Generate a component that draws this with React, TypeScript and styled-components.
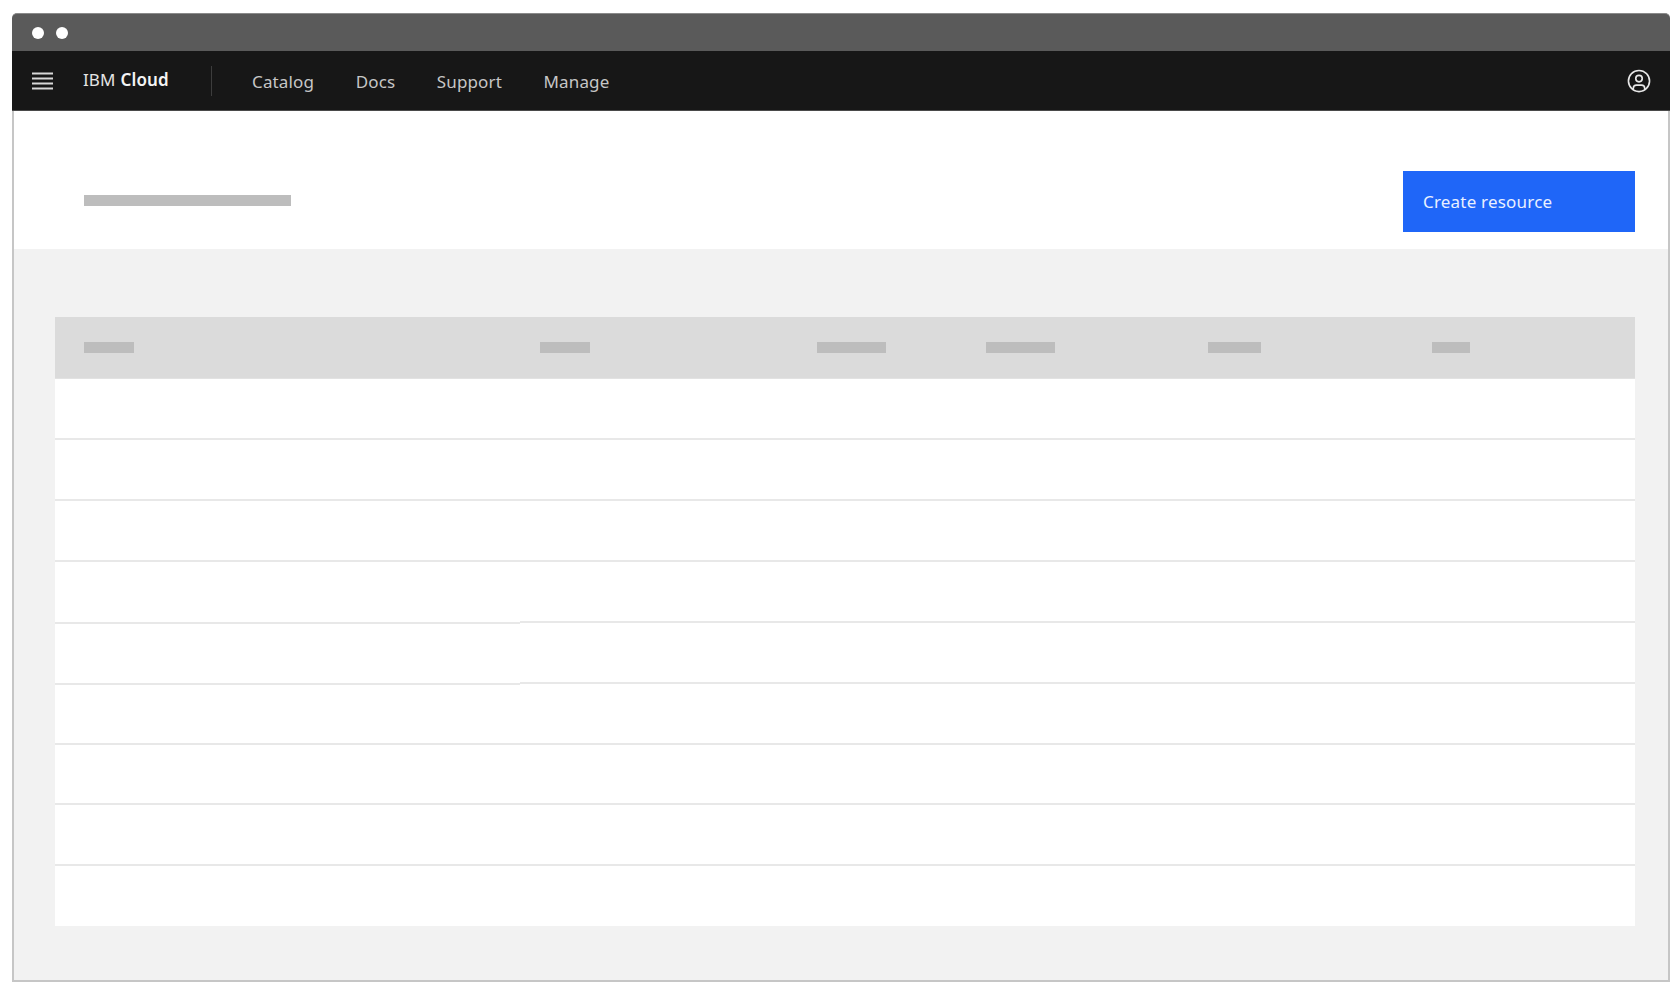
import styled, { createGlobalStyle } from 'styled-components'

const GlobalStyle = createGlobalStyle`
  html, body {
    margin: 0;
    padding: 0;
    background: #ffffff;
  }
  * {
    box-sizing: border-box;
  }
`

const Frame = styled.div`
  width: 1658px;
  height: 969px;
  margin: 13px 0 0 12px;
  display: flex;
  flex-direction: column;
  font-family: 'Noto Sans', 'Liberation Sans', sans-serif;
`

const TitleBar = styled.div`
  height: 38px;
  flex: none;
  display: flex;
  align-items: center;
  gap: 12px;
  padding: 1px 0 0 20px;
  background: #5a5a5a;
  border-top: 1px solid #8a8a8a;
  border-radius: 5px 5px 0 0;
`

const Dot = styled.span`
  width: 12px;
  height: 12px;
  border-radius: 50%;
  background: #ffffff;
`

const NavBar = styled.nav`
  height: 60px;
  flex: none;
  display: flex;
  align-items: center;
  background: #171717;
  border-bottom: 1px solid #4a4a4a;
  padding: 0 18px 0 20px;
`

const MenuIcon = styled.svg`
  width: 21px;
  height: 18px;
  flex: none;
  margin: 0 30px 0 0;
  color: #d8d8d8;
`

const Brand = styled.div`
  width: 129px;
  height: 30px;
  flex: none;
  display: flex;
  align-items: center;
  font-size: 17px;
  letter-spacing: 0.1px;
  color: #e4e4e4;
  border-right: 1px solid #3d3d3d;
  margin-right: 40px;
  padding-bottom: 3px;

  strong {
    font-weight: 600;
    color: #f4f4f4;
    margin-left: 5px;
  }
`

const NavLinks = styled.div`
  display: flex;
  gap: 41.5px;
  flex: 1;
  padding-top: 1px;
`

const NavLink = styled.span`
  font-size: 17px;
  letter-spacing: 0.15px;
  color: #c6c6c6;
`

const UserIcon = styled.svg`
  width: 26px;
  height: 26px;
  flex: none;
  color: #e8e8e8;
  margin-top: 1px;
`

const Body = styled.div`
  flex: 1;
  display: flex;
  flex-direction: column;
  border: solid #c6c6c6;
  border-width: 0 2px 2px 2px;
`

const PageHeader = styled.header`
  height: 138px;
  flex: none;
  display: flex;
  align-items: center;
  justify-content: space-between;
  padding: 60px 33px 17px 70px;
  background: #ffffff;
`

const Placeholder = styled.span<{ $w: number; $h?: number }>`
  display: block;
  width: ${({ $w }) => $w}px;
  height: ${({ $h }) => $h ?? 11}px;
  background: #bdbdbd;
`

const PageTitle = styled(Placeholder)`
  margin-top: -3px;
`

const PrimaryButton = styled.button`
  width: 232px;
  height: 61px;
  border: 0;
  padding: 0 0 0 20px;
  text-align: left;
  background: #1f66f8;
  color: #e9f0ff;
  font-family: inherit;
  font-size: 17px;
  letter-spacing: 0.2px;
`

const Content = styled.main`
  flex: 1;
  background: #f2f2f2;
  padding: 68px 33px 54px 41px;
`

const Table = styled.div`
  display: flex;
  flex-direction: column;
`

const HeaderRow = styled.div`
  height: 62px;
  display: grid;
  grid-template-columns: 456px 277px 169px 222px 224px 1fr;
  align-items: center;
  padding-left: 29px;
  background: #dbdbdb;
  border-bottom: 1px solid #e2e2e2;
`

const Row = styled.div`
  height: 61px;
  display: flex;
  background: #ffffff;

  &:nth-child(8) {
    height: 60px;
  }

  &:last-child {
    height: 60px;
  }
`

// the first column's rule sits a pixel lower on the rows marked $low
const FirstCell = styled.div<{ $low?: boolean; $last?: boolean }>`
  position: relative;
  width: 465px;
  height: ${({ $low }) => ($low ? 'calc(100% + 1px)' : '100%')};
  flex: none;
  border-bottom: ${({ $last }) => ($last ? '0' : '2px solid #e8e8e8')};
`

const RestCell = styled.div<{ $last?: boolean }>`
  flex: 1;
  border-bottom: ${({ $last }) => ($last ? '0' : '2px solid #e8e8e8')};
`

const headerWidths = [50, 50, 69, 69, 53, 38]
const rows = Array.from({ length: 9 }, (_, i) => i)

export default function App() {
  return (
    <>
      <GlobalStyle />
      <Frame>
        <TitleBar>
          <Dot />
          <Dot />
        </TitleBar>
        <NavBar>
          <MenuIcon viewBox="0 0 21 18" fill="currentColor">
            <rect y="0.5" width="21" height="2" />
            <rect y="5.5" width="21" height="2" />
            <rect y="10.5" width="21" height="2" />
            <rect y="15.5" width="21" height="2" />
          </MenuIcon>
          <Brand>
            IBM<strong>Cloud</strong>
          </Brand>
          <NavLinks>
            <NavLink>Catalog</NavLink>
            <NavLink>Docs</NavLink>
            <NavLink>Support</NavLink>
            <NavLink>Manage</NavLink>
          </NavLinks>
          <UserIcon viewBox="0 0 32 32" fill="currentColor">
            <path d="M16,8a5,5,0,1,0,5,5A5,5,0,0,0,16,8Zm0,8a3,3,0,1,1,3-3A3.0034,3.0034,0,0,1,16,16Z" />
            <path d="M16,2A14,14,0,1,0,30,16,14.0158,14.0158,0,0,0,16,2ZM10,26.3765V25a3.0033,3.0033,0,0,1,3-3h6a3.0033,3.0033,0,0,1,3,3v1.3765a11.8989,11.8989,0,0,1-12,0Zm13.9925-1.4507A5.0016,5.0016,0,0,0,19,20H13a5.0016,5.0016,0,0,0-4.9925,4.9258,12,12,0,1,1,15.985,0Z" />
          </UserIcon>
        </NavBar>
        <Body>
          <PageHeader>
            <PageTitle $w={207} />
            <PrimaryButton>Create resource</PrimaryButton>
          </PageHeader>
          <Content>
            <Table>
              <HeaderRow>
                {headerWidths.map((w, i) => (
                  <Placeholder key={i} $w={w} />
                ))}
              </HeaderRow>
              {rows.map((r) => (
                <Row key={r}>
                  <FirstCell $low={r === 3 || r === 4} $last={r === 8} />
                  <RestCell $last={r === 8} />
                </Row>
              ))}
            </Table>
          </Content>
        </Body>
      </Frame>
    </>
  )
}
